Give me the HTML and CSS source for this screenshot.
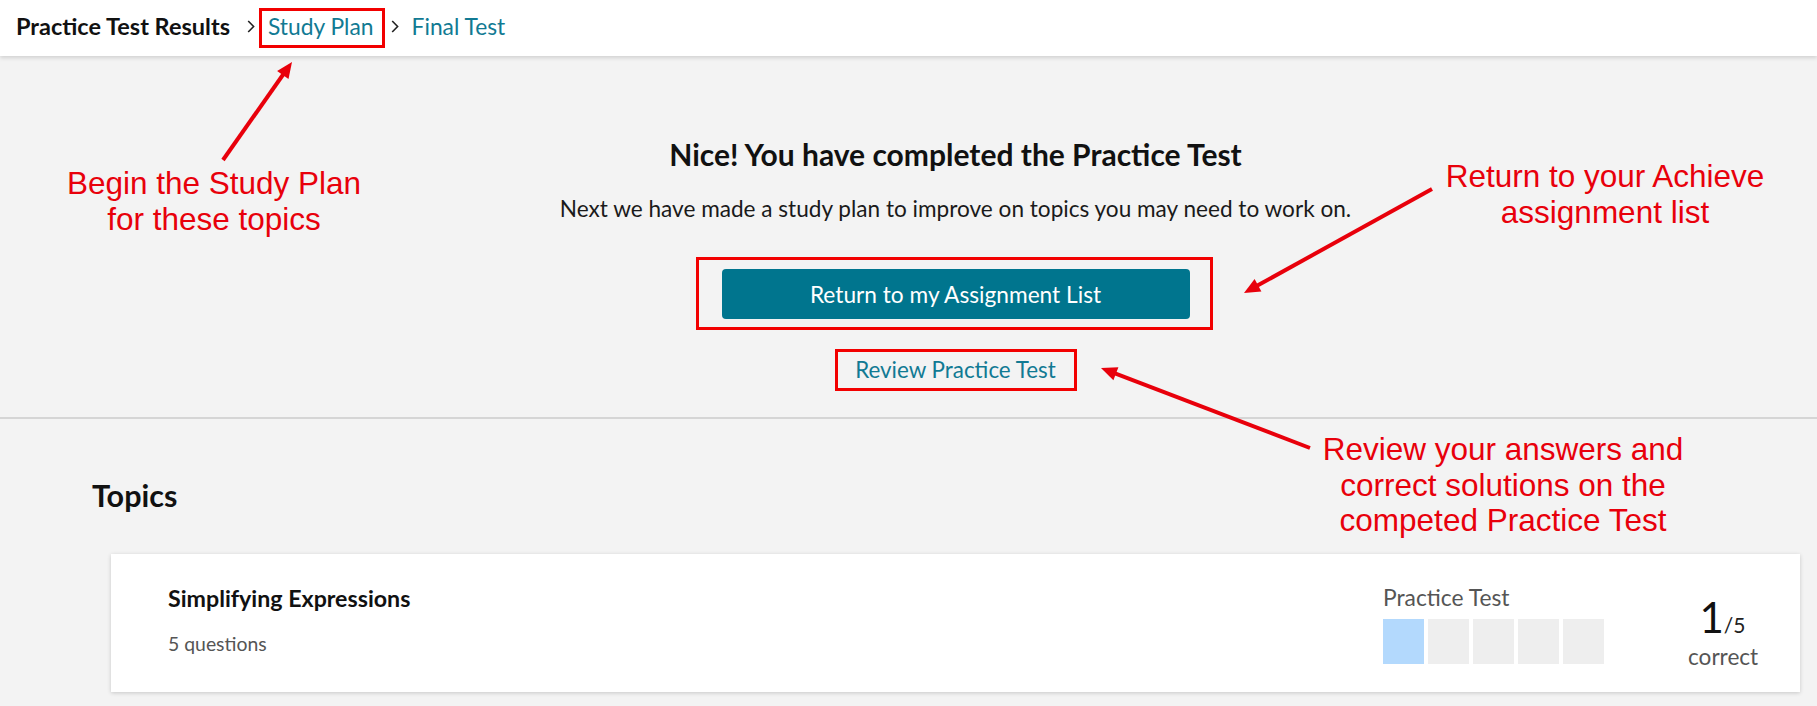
FILE: index.html
```html
<!DOCTYPE html>
<html lang="en">
<head>
<meta charset="utf-8">
<title>Practice Test Results</title>
<link rel="stylesheet" href="styles.css">
</head>
<body>
<header class="topbar">
  <nav class="crumbs">
    <span class="crumb-current">Practice Test Results</span>
    <svg class="chev" width="8" height="13" viewBox="0 0 8 13"><path d="M1.2 1 L6.6 6.5 L1.2 12" fill="none" stroke="#222" stroke-width="1.6"/></svg>
    <a class="crumb-link boxed boxed-crumb" href="#">Study Plan</a>
    <svg class="chev" width="8" height="13" viewBox="0 0 8 13"><path d="M1.2 1 L6.6 6.5 L1.2 12" fill="none" stroke="#222" stroke-width="1.6"/></svg>
    <a class="crumb-link" href="#">Final Test</a>
  </nav>
</header>

<section class="hero">
  <h1 class="hero-title">Nice! You have completed the Practice Test</h1>
  <p class="hero-text">Next we have made a study plan to improve on topics you may need to work on.</p>
  <button class="primary-btn boxed boxed-btn" type="button">Return to my Assignment List</button>
  <a class="review-link boxed boxed-review" href="#">Review Practice Test</a>
</section>

<main class="topics">
  <h2 class="topics-title">Topics</h2>
  <div class="topic-card">
    <div class="topic-info">
      <div class="topic-name">Simplifying Expressions</div>
      <div class="topic-count">5 questions</div>
    </div>
    <div class="topic-progress">
      <div class="progress-label">Practice Test</div>
      <div class="progress-bars">
        <span class="bar bar-on"></span>
        <span class="bar"></span>
        <span class="bar"></span>
        <span class="bar"></span>
        <span class="bar"></span>
      </div>
    </div>
    <div class="topic-score">
      <div class="score-line"><span class="score-big">1</span><span class="score-small">/5</span></div>
      <div class="score-label">correct</div>
    </div>
  </div>
</main>

<div class="note note-plan">Begin the Study Plan<br>for these topics</div>
<div class="note note-return">Return to your Achieve<br>assignment list</div>
<div class="note note-review">Review your answers and<br>correct solutions on the<br>competed Practice Test</div>

<svg class="arrows" width="1817" height="706" viewBox="0 0 1817 706">
  <g stroke="#e8000b" stroke-width="4" fill="#e8000b">
    <line x1="223" y1="160" x2="283.5" y2="74"/>
    <polygon stroke="none" points="292,62 288.5,79.1 277.1,71.1"/>
    <line x1="1432" y1="189" x2="1257" y2="285.8"/>
    <polygon stroke="none" points="1244,293 1254.6,279.1 1261.4,291.4"/>
    <line x1="1310" y1="448" x2="1115" y2="373.4"/>
    <polygon stroke="none" points="1101,368 1118.4,367.2 1113.4,380.2"/>
  </g>
</svg>
</body>
</html>
```

FILE: styles.css
```css
* { box-sizing: border-box; }

html, body {
  margin: 0;
  padding: 0;
}

body {
  position: relative;
  width: 1817px;
  height: 706px;
  overflow: hidden;
  background: #f3f3f3;
  font-family: "Lato", "Liberation Sans", sans-serif;
  color: #111;
}

/* ---------- top bar ---------- */
.topbar {
  height: 56px;
  background: #fff;
  box-shadow: 0 2px 4px rgba(0, 0, 0, 0.14);
  display: flex;
  align-items: center;
  padding: 0 0 4px 16px;
  position: relative;
  z-index: 1;
}

.crumbs {
  display: flex;
  align-items: center;
  line-height: 26px;
}

.crumb-current {
  font-size: 23.5px;
  font-weight: 700;
  color: #111;
}

.chev {
  display: block;
  margin: 1px 13px 0 17px;
}

.crumb-link {
  font-size: 22.8px;
  color: #117a93;
  text-decoration: none;
}

/* red annotation frames */
.boxed { position: relative; }
.boxed::after {
  content: "";
  position: absolute;
  border: 3px solid #f20000;
  pointer-events: none;
}
.boxed-crumb::after { top: -5px; right: -11px; bottom: -9px; left: -9px; }
.boxed-btn::after { top: -12px; right: -23px; bottom: -11px; left: -26px; }
.boxed-review::after { top: -8px; right: -21px; bottom: -8px; left: -20px; }

/* ---------- hero ---------- */
.hero {
  display: flex;
  flex-direction: column;
  align-items: center;
  padding: 81px 0 34px 94px;
  border-bottom: 2px solid #d5d5d5;
}

.hero-title {
  margin: 0;
  font-size: 30px;
  line-height: 34px;
  font-weight: 700;
  color: #111;
}

.hero-text {
  margin: 25px 0 0;
  font-size: 22.6px;
  line-height: 26px;
  color: #1a1a1a;
}

.primary-btn {
  margin-top: 47px;
  width: 468px;
  height: 50px;
  border: 0;
  border-radius: 4px;
  background: #00758e;
  color: #fff;
  font-family: inherit;
  font-size: 22.7px;
  font-weight: 400;
  cursor: pointer;
}

.review-link {
  margin-top: 38px;
  font-size: 22.4px;
  line-height: 26px;
  color: #117a93;
  text-decoration: none;
}

/* ---------- topics ---------- */
.topics {
  padding: 0 17px 0 92px;
}

.topics-title {
  margin: 58px 0 0;
  font-size: 30.5px;
  line-height: 36px;
  font-weight: 700;
  color: #111;
}

.topic-card {
  margin: 41px 0 0 19px;
  height: 138px;
  background: #fff;
  box-shadow: 0 1px 4px rgba(0, 0, 0, 0.18);
  display: flex;
  align-items: flex-start;
  padding: 30px 43px 0 57px;
}

.topic-info {
  flex: 1;
}

.topic-name {
  font-size: 23.2px;
  line-height: 28px;
  font-weight: 700;
  color: #111;
}

.topic-count {
  margin-top: 20px;
  font-size: 19.4px;
  line-height: 24px;
  color: #555;
}

.progress-label {
  font-size: 22.8px;
  line-height: 26px;
  color: #555;
}

.progress-bars {
  display: flex;
  gap: 4px;
  margin-top: 9px;
}

.bar {
  display: block;
  width: 41px;
  height: 45px;
  background: #eeeeee;
}

.bar-on {
  background: #b3d9fd;
}

.topic-score {
  width: 69px;
  margin-left: 84px;
  padding-top: 15px;
  text-align: center;
}

.score-line {
  line-height: 36px;
  white-space: nowrap;
}

.score-big {
  font-size: 42px;
  color: #111;
}

.score-small {
  font-size: 21px;
  color: #222;
}

.score-label {
  font-size: 22.6px;
  line-height: 24px;
  color: #555;
}

/* ---------- annotations (overlay) ---------- */
.note {
  position: absolute;
  font-family: "Liberation Sans", Arial, sans-serif;
  font-size: 31.5px;
  line-height: 35.5px;
  color: #e8000b;
  text-align: center;
  white-space: nowrap;
  pointer-events: none;
}

.note-plan { left: 14px; top: 166px; width: 400px; }
.note-return { left: 1405px; top: 159px; width: 400px; }
.note-review { left: 1303px; top: 432px; width: 400px; }

.arrows {
  position: absolute;
  left: 0;
  top: 0;
  pointer-events: none;
}
```
